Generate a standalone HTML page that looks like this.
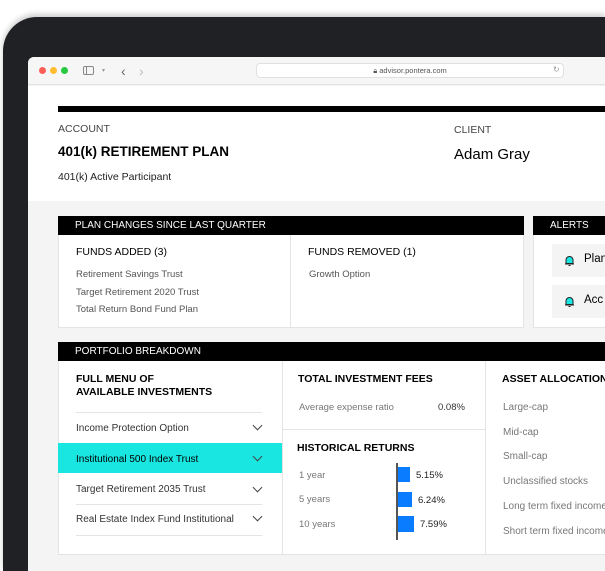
<!DOCTYPE html>
<html><head><style>
*{margin:0;padding:0;box-sizing:border-box}
html,body{width:605px;height:571px;overflow:hidden}
body{background:#fff;font-family:"Liberation Sans",sans-serif;position:relative}
.a{position:absolute}
.frame{left:3px;top:17px;width:602px;height:554px;background:#202124;border-radius:34px 0 0 0;box-shadow:0 -3px 6px #ccc}
.screen{left:28px;top:57px;width:577px;height:514px;background:#f4f4f4;border-radius:6px 0 0 0;overflow:hidden}
.t{color:#000;white-space:nowrap}
.hdr{background:#000;color:#fff;font-size:10px;height:19px;line-height:19px;padding-left:17px}
.box{background:#fff;border:1px solid #e4e4e4}
.chev{width:7px;height:7px;border-right:1.2px solid #444;border-bottom:1.2px solid #444;transform:rotate(45deg)}
</style></head><body>
<div class="a frame"></div>
<div class="a screen">
 <div class="a" style="left:0;top:0;width:577px;height:28px;background:#f6f6f6;border-bottom:1px solid #e2e2e2"></div>
 <div class="a" style="left:11px;top:10px;width:7px;height:7px;border-radius:50%;background:#fe5f57"></div>
 <div class="a" style="left:22px;top:10px;width:7px;height:7px;border-radius:50%;background:#febc2e"></div>
 <div class="a" style="left:33px;top:10px;width:7px;height:7px;border-radius:50%;background:#28c840"></div>
 <div class="a" style="left:55px;top:9px;width:11px;height:9px;border:1px solid #888;border-radius:2px"></div>
 <div class="a" style="left:58px;top:9px;width:1px;height:9px;background:#888"></div>
 <div class="a" style="left:74px;top:10px;font-size:6px;color:#999">▾</div>
 <div class="a" style="left:93px;top:6px;font-size:14px;color:#666">‹</div>
 <div class="a" style="left:111px;top:6px;font-size:14px;color:#bbb">›</div>
 <div class="a" style="left:228px;top:6px;width:308px;height:15px;background:#fff;border:1px solid #e0e0e0;border-radius:4px;font-size:7.5px;color:#555;text-align:center;line-height:13px">🔒︎ advisor.pontera.com</div>
 <div class="a" style="left:525px;top:8px;font-size:8px;color:#999">↻</div>
 <div class="a" style="left:0;top:29px;width:577px;height:115px;background:#fff"></div>
 <div class="a" style="left:30px;top:49px;width:547px;height:6px;background:#000"></div>
 <div class="a t" style="left:30px;top:66px;font-size:10.5px;color:#444">ACCOUNT</div>
 <div class="a t" style="left:30px;top:87px;font-size:13.5px;font-weight:bold">401(k) RETIREMENT PLAN</div>
 <div class="a t" style="left:30px;top:114px;font-size:10.5px;color:#222">401(k) Active Participant</div>
 <div class="a t" style="left:426px;top:67px;font-size:10.5px;color:#444">CLIENT</div>
 <div class="a t" style="left:426px;top:89px;font-size:15px">Adam Gray</div>

 <div class="a box" style="left:30px;top:159px;width:466px;height:112px"></div>
 <div class="a hdr" style="left:30px;top:159px;width:466px">PLAN CHANGES SINCE LAST QUARTER</div>
 <div class="a" style="left:262px;top:178px;width:1px;height:93px;background:#e4e4e4"></div>
 <div class="a t" style="left:48px;top:189px;font-size:10.5px">FUNDS ADDED (3)</div>
 <div class="a t" style="left:48px;top:212px;font-size:9.5px;color:#555">Retirement Savings Trust</div>
 <div class="a t" style="left:48px;top:230px;font-size:9.5px;color:#555">Target Retirement 2020 Trust</div>
 <div class="a t" style="left:48px;top:247px;font-size:9.5px;color:#555">Total Return Bond Fund Plan</div>
 <div class="a t" style="left:280px;top:189px;font-size:10.5px">FUNDS REMOVED (1)</div>
 <div class="a t" style="left:281px;top:212px;font-size:9.5px;color:#555">Growth Option</div>

 <div class="a box" style="left:505px;top:159px;width:80px;height:112px;border-right:none"></div>
 <div class="a hdr" style="left:505px;top:159px;width:72px">ALERTS</div>
 <div class="a" style="left:524px;top:187px;width:53px;height:33px;background:#f4f4f4"></div>
 <div class="a" style="left:524px;top:228px;width:53px;height:33px;background:#f4f4f4"></div>
 <svg class="a" style="left:536px;top:198px" width="11" height="12" viewBox="0 0 11 12"><path d="M2 8.5 V5 a3.5 3.5 0 0 1 7 0 V8.5 Z" fill="#19e6e0" stroke="#222" stroke-width="1"/><path d="M1 9 H10" stroke="#222"/><path d="M4.5 10.5 h2" stroke="#222"/></svg>
 <svg class="a" style="left:536px;top:239px" width="11" height="12" viewBox="0 0 11 12"><path d="M2 8.5 V5 a3.5 3.5 0 0 1 7 0 V8.5 Z" fill="#19e6e0" stroke="#222" stroke-width="1"/><path d="M1 9 H10" stroke="#222"/><path d="M4.5 10.5 h2" stroke="#222"/></svg>
 <div class="a t" style="left:556px;top:196px;font-size:11.5px">Plan</div>
 <div class="a t" style="left:556px;top:237px;font-size:11.5px">Acc</div>

 <div class="a box" style="left:30px;top:285px;width:560px;height:213px"></div>
 <div class="a hdr" style="left:30px;top:285px;width:547px">PORTFOLIO BREAKDOWN</div>
 <div class="a" style="left:254px;top:304px;width:1px;height:194px;background:#e4e4e4"></div>
 <div class="a" style="left:457px;top:304px;width:1px;height:194px;background:#e4e4e4"></div>
 <div class="a" style="left:255px;top:372px;width:202px;height:1px;background:#e4e4e4"></div>
 <div class="a t" style="left:48px;top:316px;font-size:10.5px;line-height:13px;font-weight:bold">FULL MENU OF<br>AVAILABLE INVESTMENTS</div>
 <div class="a" style="left:48px;top:355px;width:186px;height:1px;background:#e4e4e4"></div>
 <div class="a t" style="left:48px;top:366px;font-size:10px;color:#333">Income Protection Option</div>
 <div class="a chev" style="left:226px;top:365px"></div>
 <div class="a" style="left:30px;top:386px;width:224px;height:30px;background:#19e6e0"></div>
 <div class="a t" style="left:48px;top:397px;font-size:10px">Institutional 500 Index Trust</div>
 <div class="a chev" style="left:226px;top:396px"></div>
 <div class="a t" style="left:48px;top:427px;font-size:10px;color:#333">Target Retirement 2035 Trust</div>
 <div class="a chev" style="left:226px;top:427px"></div>
 <div class="a" style="left:48px;top:447px;width:186px;height:1px;background:#e4e4e4"></div>
 <div class="a t" style="left:48px;top:457px;font-size:10px;color:#333">Real Estate Index Fund Institutional</div>
 <div class="a chev" style="left:226px;top:456px"></div>
 <div class="a" style="left:48px;top:478px;width:186px;height:1px;background:#e4e4e4"></div>

 <div class="a t" style="left:270px;top:316px;font-size:10.5px;font-weight:bold">TOTAL INVESTMENT FEES</div>
 <div class="a t" style="left:271px;top:345px;font-size:9.5px;color:#777">Average expense ratio</div>
 <div class="a t" style="left:410px;top:345px;font-size:9.5px;color:#333">0.08%</div>
 <div class="a t" style="left:269px;top:385px;font-size:10.5px;font-weight:bold">HISTORICAL RETURNS</div>
 <div class="a" style="left:368px;top:406px;width:1.5px;height:77px;background:#555"></div>
 <div class="a t" style="left:271px;top:413px;font-size:9.5px;color:#777">1 year</div>
 <div class="a" style="left:370px;top:410px;width:12px;height:15px;background:#0a7cff"></div>
 <div class="a t" style="left:388px;top:413px;font-size:9.5px;color:#222">5.15%</div>
 <div class="a t" style="left:271px;top:437px;font-size:9.5px;color:#777">5 years</div>
 <div class="a" style="left:370px;top:435px;width:14px;height:15px;background:#0a7cff"></div>
 <div class="a t" style="left:390px;top:438px;font-size:9.5px;color:#222">6.24%</div>
 <div class="a t" style="left:271px;top:462px;font-size:9.5px;color:#777">10 years</div>
 <div class="a" style="left:370px;top:459px;width:16px;height:16px;background:#0a7cff"></div>
 <div class="a t" style="left:392px;top:462px;font-size:9.5px;color:#222">7.59%</div>

 <div class="a t" style="left:474px;top:316px;font-size:10.5px;font-weight:bold">ASSET ALLOCATION</div>
 <div class="a t" style="left:475px;top:345px;font-size:10px;color:#777">Large-cap</div>
 <div class="a t" style="left:475px;top:370px;font-size:10px;color:#777">Mid-cap</div>
 <div class="a t" style="left:475px;top:394px;font-size:10px;color:#777">Small-cap</div>
 <div class="a t" style="left:475px;top:419px;font-size:10px;color:#777">Unclassified stocks</div>
 <div class="a t" style="left:475px;top:444px;font-size:10px;color:#777">Long term fixed income</div>
 <div class="a t" style="left:475px;top:469px;font-size:10px;color:#777">Short term fixed income</div>
</div>
</body></html>
